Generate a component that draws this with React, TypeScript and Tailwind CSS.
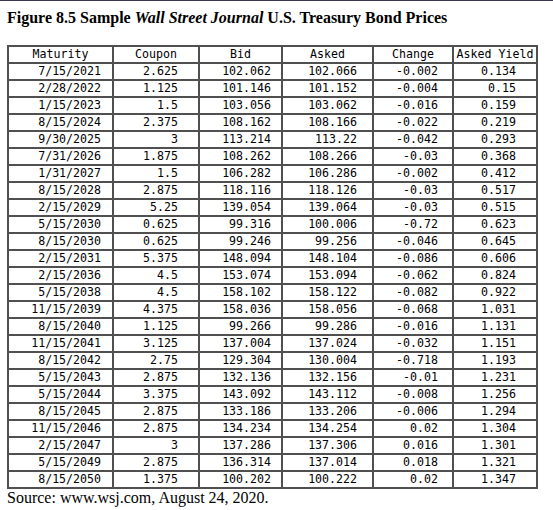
const rows: string[][] = [
  ['7/15/2021', '2.625', '102.062', '102.066', '-0.002', '0.134'],
  ['2/28/2022', '1.125', '101.146', '101.152', '-0.004', '0.15'],
  ['1/15/2023', '1.5', '103.056', '103.062', '-0.016', '0.159'],
  ['8/15/2024', '2.375', '108.162', '108.166', '-0.022', '0.219'],
  ['9/30/2025', '3', '113.214', '113.22', '-0.042', '0.293'],
  ['7/31/2026', '1.875', '108.262', '108.266', '-0.03', '0.368'],
  ['1/31/2027', '1.5', '106.282', '106.286', '-0.002', '0.412'],
  ['8/15/2028', '2.875', '118.116', '118.126', '-0.03', '0.517'],
  ['2/15/2029', '5.25', '139.054', '139.064', '-0.03', '0.515'],
  ['5/15/2030', '0.625', '99.316', '100.006', '-0.72', '0.623'],
  ['8/15/2030', '0.625', '99.246', '99.256', '-0.046', '0.645'],
  ['2/15/2031', '5.375', '148.094', '148.104', '-0.086', '0.606'],
  ['2/15/2036', '4.5', '153.074', '153.094', '-0.062', '0.824'],
  ['5/15/2038', '4.5', '158.102', '158.122', '-0.082', '0.922'],
  ['11/15/2039', '4.375', '158.036', '158.056', '-0.068', '1.031'],
  ['8/15/2040', '1.125', '99.266', '99.286', '-0.016', '1.131'],
  ['11/15/2041', '3.125', '137.004', '137.024', '-0.032', '1.151'],
  ['8/15/2042', '2.75', '129.304', '130.004', '-0.718', '1.193'],
  ['5/15/2043', '2.875', '132.136', '132.156', '-0.01', '1.231'],
  ['5/15/2044', '3.375', '143.092', '143.112', '-0.008', '1.256'],
  ['8/15/2045', '2.875', '133.186', '133.206', '-0.006', '1.294'],
  ['11/15/2046', '2.875', '134.234', '134.254', '0.02', '1.304'],
  ['2/15/2047', '3', '137.286', '137.306', '0.016', '1.301'],
  ['5/15/2049', '2.875', '136.314', '137.014', '0.018', '1.321'],
  ['8/15/2050', '1.375', '100.202', '100.222', '0.02', '1.347'],
];

const headers = ['Maturity', 'Coupon', 'Bid', 'Asked', 'Change', 'Asked Yield'];

// right padding per column, so the figures sit where the original has them
const pad = ['pr-[11px]', 'pr-[20px]', 'pr-[10px]', 'pr-[15px]', 'pr-[14px]', 'pr-[20px]'];

export default function App() {
  return (
    <div className="w-[553px] h-[510px] bg-white border-t border-[#373750] overflow-hidden">
      <div className="pl-[7px] pt-[8px]">
        <h1 className="text-[16px] leading-[18px] font-bold text-black font-['Liberation_Serif',serif]">
          Figure 8.5 Sample <i>Wall Street Journal</i> U.S. Treasury Bond Prices
        </h1>

        {/* Table */}
        <div className="mt-[18px] w-[531px] grid grid-cols-[105px_86px_83px_91px_80px_84px] border-l-2 border-t-2 border-[#505050] font-['DejaVu_Sans_Mono',monospace] text-[11.6px] text-black">
          {headers.map((h) => (
            <div
              key={h}
              className="h-[17px] flex items-center justify-center border-r-2 border-b-2 border-[#505050] whitespace-nowrap"
            >
              {h}
            </div>
          ))}
          {rows.map((row, i) =>
            row.map((cell, j) => (
              <div
                key={`${i}-${j}`}
                className={`h-[17px] flex items-center justify-end border-r-2 border-b-2 border-[#505050] ${pad[j]}`}
              >
                {cell}
              </div>
            ))
          )}
        </div>

        <p className="text-[16px] leading-[18px] text-black font-['Liberation_Serif',serif]">
          Source: www.wsj.com, August 24, 2020.
        </p>
      </div>
    </div>
  );
}
